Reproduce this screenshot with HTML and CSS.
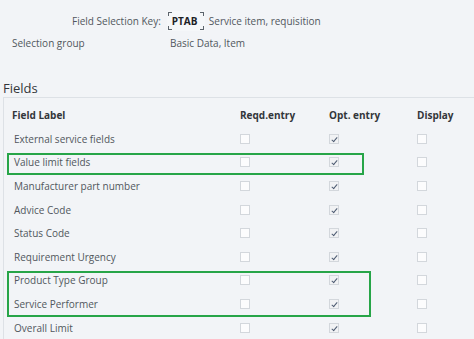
FILE: index.html
```html
<!DOCTYPE html>
<html>
<head>
<meta charset="utf-8">
<link rel="stylesheet" href="styles.css">
</head>
<body>
<div class="page">
  <div class="key-row">
    <span class="key-label">Field Selection Key:</span>
    <span class="key-box">PTAB</span>
    <span class="key-desc">Service item, requisition</span>
  </div>
  <div class="group-row">
    <span class="group-label">Selection group</span>
    <span class="group-value">Basic Data, Item</span>
  </div>
  <div class="section-title">Fields</div>
  <div class="table">
    <div class="row head">
      <div class="c-label">Field Label</div>
      <div class="c-col">Reqd.entry</div>
      <div class="c-col">Opt. entry</div>
      <div class="c-col">Display</div>
    </div>
    <div class="row"><div class="c-label">External service fields</div><div class="c-col"><span class="cb"></span></div><div class="c-col"><span class="cb on"></span></div><div class="c-col"><span class="cb"></span></div></div>
    <div class="row"><div class="c-label">Value limit fields</div><div class="c-col"><span class="cb"></span></div><div class="c-col"><span class="cb on"></span></div><div class="c-col"><span class="cb"></span></div></div>
    <div class="row"><div class="c-label">Manufacturer part number</div><div class="c-col"><span class="cb"></span></div><div class="c-col"><span class="cb on"></span></div><div class="c-col"><span class="cb"></span></div></div>
    <div class="row"><div class="c-label">Advice Code</div><div class="c-col"><span class="cb"></span></div><div class="c-col"><span class="cb on"></span></div><div class="c-col"><span class="cb"></span></div></div>
    <div class="row"><div class="c-label">Status Code</div><div class="c-col"><span class="cb"></span></div><div class="c-col"><span class="cb on"></span></div><div class="c-col"><span class="cb"></span></div></div>
    <div class="row"><div class="c-label">Requirement Urgency</div><div class="c-col"><span class="cb"></span></div><div class="c-col"><span class="cb on"></span></div><div class="c-col"><span class="cb"></span></div></div>
    <div class="row"><div class="c-label">Product Type Group</div><div class="c-col"><span class="cb"></span></div><div class="c-col"><span class="cb on"></span></div><div class="c-col"><span class="cb"></span></div></div>
    <div class="row"><div class="c-label">Service Performer</div><div class="c-col"><span class="cb"></span></div><div class="c-col"><span class="cb on"></span></div><div class="c-col"><span class="cb"></span></div></div>
    <div class="row"><div class="c-label">Overall Limit</div><div class="c-col"><span class="cb"></span></div><div class="c-col"><span class="cb on"></span></div><div class="c-col"><span class="cb"></span></div></div>
  </div>
  <div class="mark mark-1"></div>
  <div class="mark mark-2"></div>
</div>
</body>
</html>
```
FILE: styles.css
```css
html, body {
  margin: 0;
  padding: 0;
  background: #f2f4f7;
}
.page {
  position: relative;
  width: 474px;
  height: 339px;
  overflow: hidden;
  font-family: "Open Sans", "Noto Sans", sans-serif;
  font-size: 10px;
  color: #51575d;
}
.key-row {
  display: flex;
  align-items: center;
  height: 22px;
  margin-top: 10px;
  padding-left: 72px;
}
.key-label {
  margin-right: 6px;
}
.key-box {
  position: relative;
  width: 38px;
  height: 20px;
  box-sizing: border-box;
  display: flex;
  align-items: center;
  padding-left: 4px;
  font-weight: 700;
  color: #1d2126;
  background: #f5f7f9;
  border: 1px solid transparent;
  background-image:
    linear-gradient(#5b636b, #5b636b), linear-gradient(#5b636b, #5b636b),
    linear-gradient(#5b636b, #5b636b), linear-gradient(#5b636b, #5b636b),
    linear-gradient(#5b636b, #5b636b), linear-gradient(#5b636b, #5b636b),
    linear-gradient(#5b636b, #5b636b), linear-gradient(#5b636b, #5b636b);
  background-repeat: no-repeat;
  background-size: 4px 1px, 1px 4px, 4px 1px, 1px 4px, 4px 1px, 1px 4px, 4px 1px, 1px 4px;
  background-position: 0 0, 0 0, 100% 0, 100% 0, 0 100%, 0 100%, 100% 100%, 100% 100%;
  margin-right: 4px;
}
.group-row {
  display: flex;
  align-items: center;
  height: 18px;
  margin-top: 2px;
  padding-left: 12px;
}
.group-label {
  width: 158px;
}
.section-title {
  margin-top: 28px;
  padding-left: 3px;
  font-size: 13px;
  line-height: 16px;
  color: #32363a;
}
.table {
  margin-left: 3px;
  margin-top: 1px;
  border-top: 1px solid #dde1e6;
  border-left: 1px solid #dde1e6;
}
.row {
  display: grid;
  grid-template-columns: 236px 89px 88px 1fr;
  align-items: center;
  height: 23.6px;
}
.row .c-label {
  padding-left: 10px;
}
.row.head {
  height: 29px;
  align-items: start;
  font-weight: 700;
  color: #32363a;
}
.row.head > div {
  padding-top: 10px;
  line-height: 14px;
}
.row.head .c-label {
  padding-left: 8px;
}
.cb {
  display: block;
  width: 10px;
  height: 10px;
  box-sizing: border-box;
  border: 1px solid #d3d7dc;
  background: #fcfcfd;
  position: relative;
}
.cb.on {
  background: #f1f2f4;
}
.cb.on::after {
  content: "";
  position: absolute;
  left: 3px;
  top: 1px;
  width: 2px;
  height: 5px;
  border-right: 1.2px solid #4e5c72;
  border-bottom: 1.2px solid #4e5c72;
  transform: rotate(40deg);
}
.mark {
  position: absolute;
  border: 2px solid #27a548;
  box-sizing: border-box;
}
.mark-1 {
  left: 7px;
  top: 153px;
  width: 357px;
  height: 22px;
}
.mark-2 {
  left: 7px;
  top: 271px;
  width: 364px;
  height: 46px;
}
```
